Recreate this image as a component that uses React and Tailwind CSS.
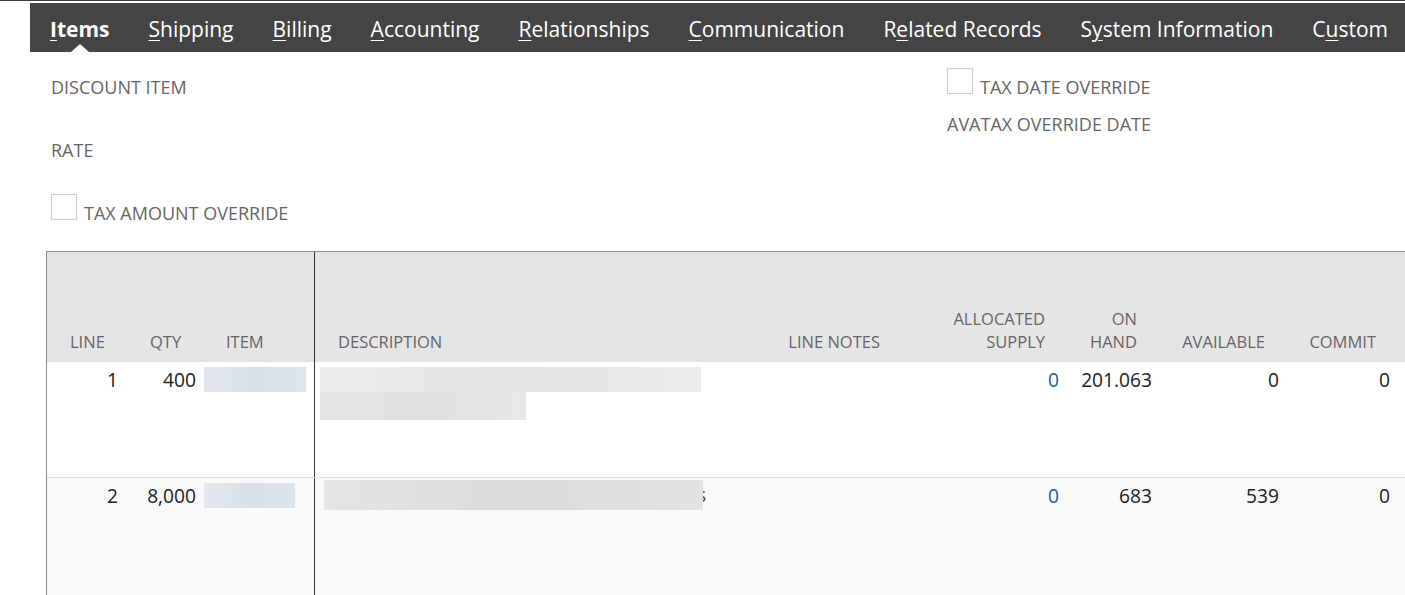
import React from "react";

const tabs = [
  { pre: "", u: "I", post: "tems", active: true },
  { pre: "", u: "S", post: "hipping" },
  { pre: "", u: "B", post: "illing" },
  { pre: "", u: "A", post: "ccounting" },
  { pre: "", u: "R", post: "elationships" },
  { pre: "", u: "C", post: "ommunication" },
  { pre: "R", u: "e", post: "lated Records" },
  { pre: "S", u: "y", post: "stem Information" },
  { pre: "C", u: "u", post: "stom" },
];

function Checkbox() {
  return <div className="w-[26px] h-[26px] border border-[#cccccc] bg-white shrink-0" />;
}

const cols =
  "grid grid-cols-[81px_72px_115px_450px_139px_165px_93px_127px_111px_100px]";

function HeadCell({ children, className = "" }) {
  return (
    <div className={"flex items-end pb-[9px] text-[16.5px] leading-[23px] text-[#666666] " + className}>
      {children}
    </div>
  );
}

function Row({ bg, line, qty, itemW, desc, alloc, onhand, avail, commit, height, border }) {
  return (
    <div className={cols + " " + bg + " " + height + " " + border}>
      <div className="pt-[6px] pr-[10px] text-right leading-[24px]">{line}</div>
      <div className="pt-[6px] pr-[4px] text-right leading-[24px]">{qty}</div>
      <div className="border-r border-[#333333] pt-[5px] pl-[4px]">
        <div
          className="h-[25px] bg-gradient-to-r from-[#e3e8f0] via-[#d8e0ea] to-[#dde4ee]"
          style={{ width: itemW }}
        />
      </div>
      <div className="pt-[5px]">{desc}</div>
      <div />
      <div className="pt-[6px] pr-[10px] text-right leading-[24px] text-[#255a9c]">{alloc}</div>
      <div className="pt-[6px] pr-[10px] text-right leading-[24px]">{onhand}</div>
      <div className="pt-[6px] pr-[10px] text-right leading-[24px]">{avail}</div>
      <div className="pt-[6px] pr-[10px] text-right leading-[24px]">{commit}</div>
      <div />
    </div>
  );
}

export default function App() {
  return (
    <div
      className="w-[1405px] h-[595px] overflow-hidden bg-white"
      style={{ fontFamily: "'Open Sans', 'Liberation Sans', sans-serif" }}
    >
      <div className="h-px bg-[#3a3a3a]" />
      <div className="mt-[2px] ml-[30px] h-[49px] bg-[#444444] flex items-center pl-[20px] gap-[39px] pt-[4px] text-[21px] text-white whitespace-nowrap">
        {tabs.map((t, i) => (
          <div key={i} className={"relative h-full flex items-center " + (t.active ? "font-bold" : "")}>
            <span>
              {t.pre}
              <span className="underline underline-offset-[3px] decoration-1">{t.u}</span>
              {t.post}
            </span>
            {t.active && (
              <div className="absolute bottom-0 left-1/2 -translate-x-1/2 w-0 h-0 border-l-[9px] border-r-[9px] border-b-[8px] border-l-transparent border-r-transparent border-b-white" />
            )}
          </div>
        ))}
      </div>

      <div className="h-[199px] flex text-[18px] leading-[24px] text-[#666666]">
        <div className="w-[947px] pl-[51px] pt-[23px] flex flex-col">
          <div>DISCOUNT ITEM</div>
          <div className="mt-[39px]">RATE</div>
          <div className="mt-[32px] flex items-start gap-[7px]">
            <Checkbox />
            <div className="mt-[7px]">TAX AMOUNT OVERRIDE</div>
          </div>
        </div>
        <div className="pt-[16px] flex flex-col">
          <div className="flex items-start gap-[7px]">
            <Checkbox />
            <div className="mt-[7px]">TAX DATE OVERRIDE</div>
          </div>
          <div className="mt-[13px]">AVATAX OVERRIDE DATE</div>
        </div>
      </div>

      <div className="ml-[46px] w-[1400px] border-t border-l border-[#8f8f8f]">
        <div className={cols + " h-[110px] bg-[#e5e5e5]"}>
          <HeadCell className="pl-[23px]">LINE</HeadCell>
          <HeadCell className="pl-[22px]">QTY</HeadCell>
          <HeadCell className="pl-[26px] border-r border-[#333333]">ITEM</HeadCell>
          <HeadCell className="pl-[23px]">DESCRIPTION</HeadCell>
          <HeadCell className="justify-end pr-[24px]">LINE NOTES</HeadCell>
          <HeadCell className="justify-end pr-[24px] text-right">
            <div>ALLOCATED<br />SUPPLY</div>
          </HeadCell>
          <HeadCell className="justify-end pr-[25px] text-right">
            <div>ON<br />HAND</div>
          </HeadCell>
          <HeadCell className="justify-end pr-[24px]">AVAILABLE</HeadCell>
          <HeadCell className="justify-end pr-[24px]">COMMIT</HeadCell>
          <HeadCell />
        </div>
        <div className="text-[19.2px] text-[#222222]">
          <Row
            bg="bg-white"
            height="h-[116px]"
            border="border-b border-[#dddddd]"
            line="1"
            qty="400"
            itemW={102}
            desc={
              <div className="pl-[5px]">
                <div className="w-[381px] h-[25px] bg-gradient-to-r from-[#ececec] via-[#e3e3e3] to-[#ebebeb]" />
                <div className="w-[206px] h-[28px] bg-gradient-to-r from-[#e6e6e6] via-[#e0e0e0] to-[#e8e8e8]" />
              </div>
            }
            alloc="0"
            onhand="201.063"
            avail="0"
            commit="0"
          />
          <Row
            bg="bg-[#f9f9f9]"
            height="h-[140px]"
            border=""
            line="2"
            qty="8,000"
            itemW={91}
            desc={
              <div className="pl-[9px] -mt-[3px] flex items-start">
                <div className="w-[379px] h-[30px] bg-gradient-to-r from-[#e4e4e4] via-[#dcdcdc] to-[#e2e2e2]" />
                <div className="w-[4px] overflow-hidden leading-[30px] text-[#444444]">
                  <span className="block -ml-[6px]">s</span>
                </div>
              </div>
            }
            alloc="0"
            onhand="683"
            avail="539"
            commit="0"
          />
        </div>
      </div>
    </div>
  );
}
